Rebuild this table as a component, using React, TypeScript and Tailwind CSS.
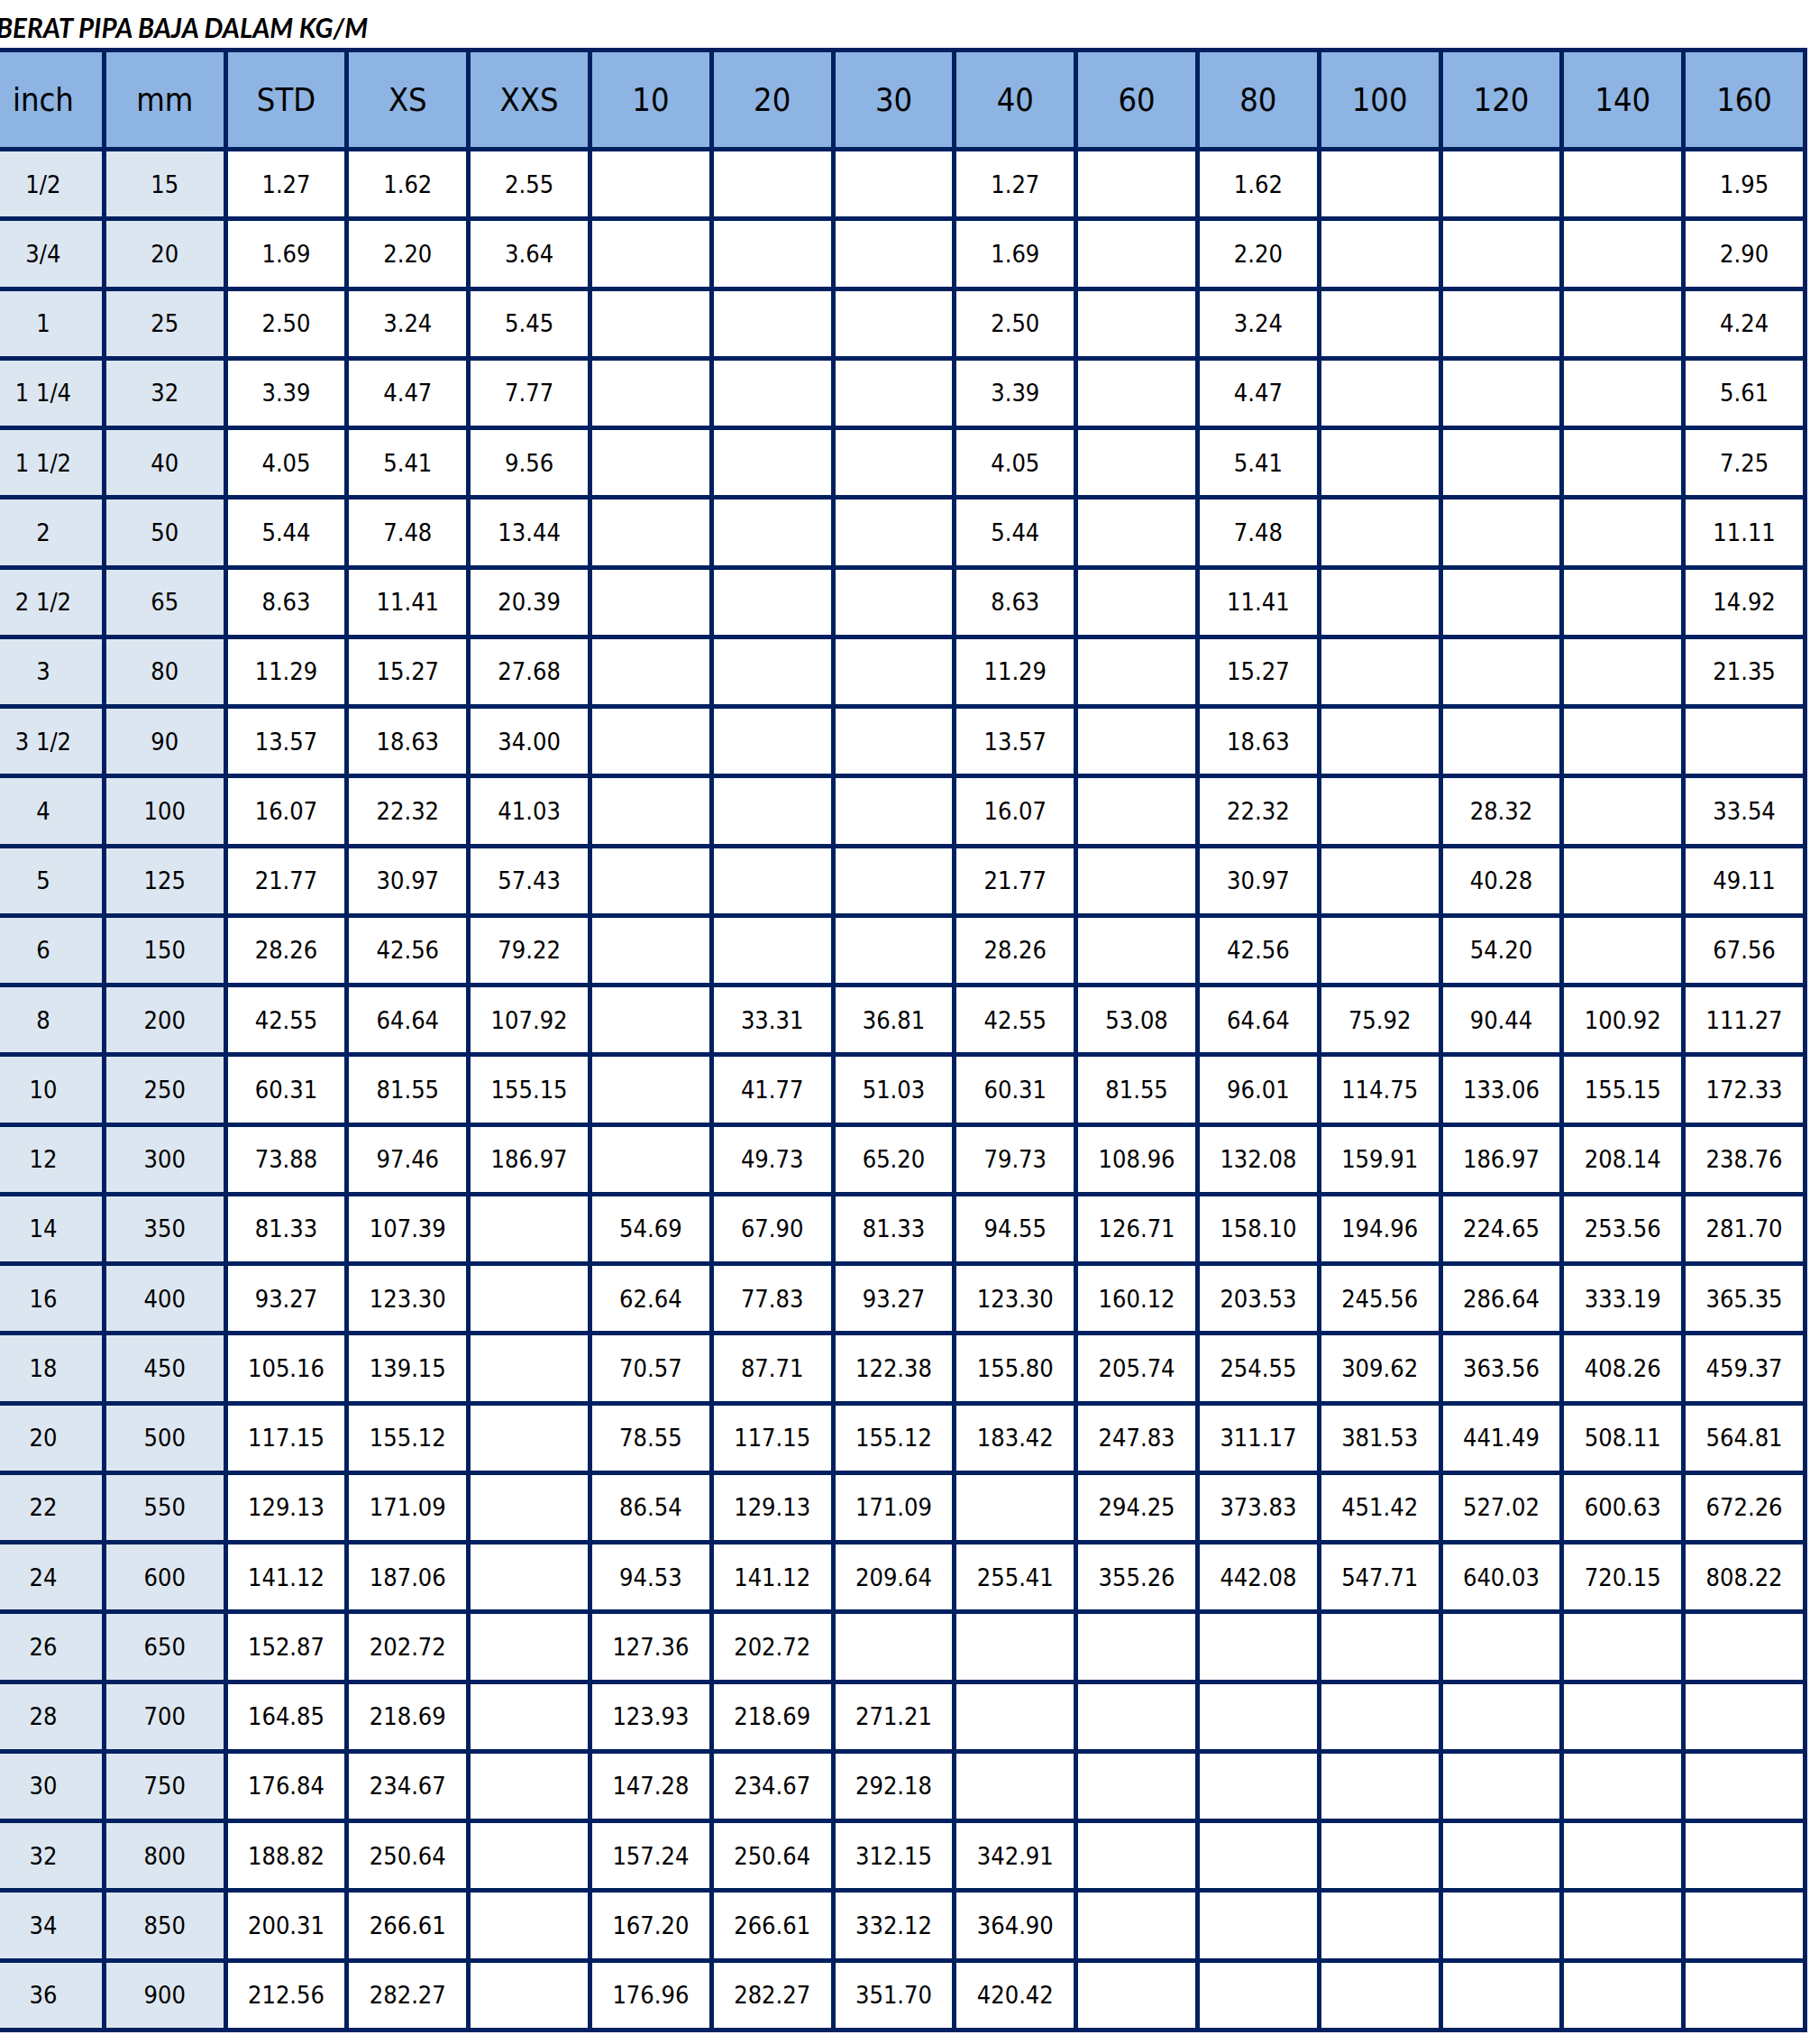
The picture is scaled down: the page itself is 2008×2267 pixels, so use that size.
const headers = ["inch", "mm", "STD", "XS", "XXS", "10", "20", "30", "40", "60", "80", "100", "120", "140", "160"];

const rows: string[][] = [
  ["1/2", "15", "1.27", "1.62", "2.55", "", "", "", "1.27", "", "1.62", "", "", "", "1.95"],
  ["3/4", "20", "1.69", "2.20", "3.64", "", "", "", "1.69", "", "2.20", "", "", "", "2.90"],
  ["1", "25", "2.50", "3.24", "5.45", "", "", "", "2.50", "", "3.24", "", "", "", "4.24"],
  ["1 1/4", "32", "3.39", "4.47", "7.77", "", "", "", "3.39", "", "4.47", "", "", "", "5.61"],
  ["1 1/2", "40", "4.05", "5.41", "9.56", "", "", "", "4.05", "", "5.41", "", "", "", "7.25"],
  ["2", "50", "5.44", "7.48", "13.44", "", "", "", "5.44", "", "7.48", "", "", "", "11.11"],
  ["2 1/2", "65", "8.63", "11.41", "20.39", "", "", "", "8.63", "", "11.41", "", "", "", "14.92"],
  ["3", "80", "11.29", "15.27", "27.68", "", "", "", "11.29", "", "15.27", "", "", "", "21.35"],
  ["3 1/2", "90", "13.57", "18.63", "34.00", "", "", "", "13.57", "", "18.63", "", "", "", ""],
  ["4", "100", "16.07", "22.32", "41.03", "", "", "", "16.07", "", "22.32", "", "28.32", "", "33.54"],
  ["5", "125", "21.77", "30.97", "57.43", "", "", "", "21.77", "", "30.97", "", "40.28", "", "49.11"],
  ["6", "150", "28.26", "42.56", "79.22", "", "", "", "28.26", "", "42.56", "", "54.20", "", "67.56"],
  ["8", "200", "42.55", "64.64", "107.92", "", "33.31", "36.81", "42.55", "53.08", "64.64", "75.92", "90.44", "100.92", "111.27"],
  ["10", "250", "60.31", "81.55", "155.15", "", "41.77", "51.03", "60.31", "81.55", "96.01", "114.75", "133.06", "155.15", "172.33"],
  ["12", "300", "73.88", "97.46", "186.97", "", "49.73", "65.20", "79.73", "108.96", "132.08", "159.91", "186.97", "208.14", "238.76"],
  ["14", "350", "81.33", "107.39", "", "54.69", "67.90", "81.33", "94.55", "126.71", "158.10", "194.96", "224.65", "253.56", "281.70"],
  ["16", "400", "93.27", "123.30", "", "62.64", "77.83", "93.27", "123.30", "160.12", "203.53", "245.56", "286.64", "333.19", "365.35"],
  ["18", "450", "105.16", "139.15", "", "70.57", "87.71", "122.38", "155.80", "205.74", "254.55", "309.62", "363.56", "408.26", "459.37"],
  ["20", "500", "117.15", "155.12", "", "78.55", "117.15", "155.12", "183.42", "247.83", "311.17", "381.53", "441.49", "508.11", "564.81"],
  ["22", "550", "129.13", "171.09", "", "86.54", "129.13", "171.09", "", "294.25", "373.83", "451.42", "527.02", "600.63", "672.26"],
  ["24", "600", "141.12", "187.06", "", "94.53", "141.12", "209.64", "255.41", "355.26", "442.08", "547.71", "640.03", "720.15", "808.22"],
  ["26", "650", "152.87", "202.72", "", "127.36", "202.72", "", "", "", "", "", "", "", ""],
  ["28", "700", "164.85", "218.69", "", "123.93", "218.69", "271.21", "", "", "", "", "", "", ""],
  ["30", "750", "176.84", "234.67", "", "147.28", "234.67", "292.18", "", "", "", "", "", "", ""],
  ["32", "800", "188.82", "250.64", "", "157.24", "250.64", "312.15", "342.91", "", "", "", "", "", ""],
  ["34", "850", "200.31", "266.61", "", "167.20", "266.61", "332.12", "364.90", "", "", "", "", "", ""],
  ["36", "900", "212.56", "282.27", "", "176.96", "282.27", "351.70", "420.42", "", "", "", "", "", ""],
];

// spreadsheet-style grid: the dark background shows through the gaps as cell borders
export default function App() {
  return (
    <div className="w-[2008px] min-h-[2267px] bg-white overflow-hidden">
      <div className="h-[53px] pt-[16px] ml-[-4px]">
        <h1 className="[font-family:'Lato',sans-serif] font-bold italic text-[29.5px] leading-[29px] text-black whitespace-nowrap">
          BERAT PIPA BAJA DALAM KG/M
        </h1>
      </div>

      <div className="ml-[-22px] w-[2027px] bg-[#002060] p-[5px] grid grid-cols-[repeat(15,129.8px)] grid-rows-[105px_repeat(27,72.26px)] gap-[5px] [font-family:'DejaVu_Sans_Condensed','DejaVu_Sans',sans-serif] text-black">
        {headers.map((h) => (
          <div key={h} className="bg-[#8DB4E2] flex items-center justify-center text-[36px] leading-none">
            {h}
          </div>
        ))}

        {rows.map((row, r) =>
          row.map((val, c) => (
            <div
              key={r + "-" + c}
              className={`flex items-center justify-center text-[27px] leading-none ${
                c < 2 ? "bg-[#DCE6F1]" : "bg-white"
              }`}
            >
              {val}
            </div>
          ))
        )}
      </div>
    </div>
  );
}
